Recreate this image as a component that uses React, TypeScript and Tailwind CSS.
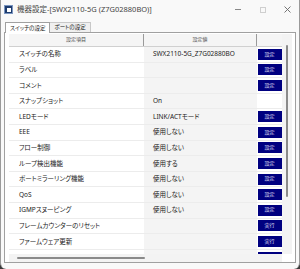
const rows: { name: string; value: string; action: string | null }[] = [
  { name: 'スイッチの名称', value: 'SWX2110-5G_Z7G02880BO', action: '設定' },
  { name: 'ラベル', value: '', action: '設定' },
  { name: 'コメント', value: '', action: '設定' },
  { name: 'スナップショット', value: 'On', action: null },
  { name: 'LEDモード', value: 'LINK/ACTモード', action: '設定' },
  { name: 'EEE', value: '使用しない', action: '設定' },
  { name: 'フロー制御', value: '使用しない', action: '設定' },
  { name: 'ループ検出機能', value: '使用する', action: '設定' },
  { name: 'ポートミラーリング機能', value: '使用しない', action: '設定' },
  { name: 'QoS', value: '使用しない', action: '設定' },
  { name: 'IGMPスヌーピング', value: '使用しない', action: '設定' },
  { name: 'フレームカウンターのリセット', value: '', action: '実行' },
  { name: 'ファームウェア更新', value: '', action: '実行' },
  { name: '', value: '', action: '' },
];

const font = "font-['Noto_Sans','Noto_Sans_CJK_JP',sans-serif] [font-feature-settings:'palt']";

export default function App() {
  return (
    <div className="w-[300px] h-[269px] bg-[#3a3a3a] overflow-hidden">
      <div className={`w-full h-full bg-[#f9f9f9] rounded-b-[6px] overflow-hidden flex flex-col border-x border-[#9a9a9a] ${font} text-[#1a1a1a]`}>
        {/* title bar */}
        <div className="h-[19px] flex items-center shrink-0">
          <div className="ml-[3px] w-[9px] h-[9px] bg-[#1d3b6e] border border-[#7a95c0] flex items-center justify-center">
            <div className="w-[4px] h-[4px] bg-white" />
          </div>
          <span className="ml-[4px] text-[7.5px] text-[#444]">機器設定-[SWX2110-5G (Z7G02880BO)]</span>
          <div className="ml-auto flex items-center h-full">
            <div className="w-[25px] h-full flex items-center justify-center">
              <div className="w-[6px] h-px bg-[#888]" />
            </div>
            <div className="w-[25px] h-full flex items-center justify-center">
              <div className="w-[6px] h-[6px] border border-[#cfcfcf]" />
            </div>
            <div className="w-[24px] h-full flex items-center justify-center">
              <svg width="7" height="7" viewBox="0 0 7 7">
                <path d="M0.5 0.5L6.5 6.5M6.5 0.5L0.5 6.5" stroke="#666" strokeWidth="0.9" />
              </svg>
            </div>
          </div>
        </div>

        {/* tabs */}
        <div className="h-[11px] mt-[2px] flex items-end pl-[4px] shrink-0">
          <div className="h-[11px] px-[4px] flex items-center bg-white border border-b-0 border-[#a0a0a0] text-[5.5px] relative top-px z-10">
            スイッチの設定
          </div>
          <div className="h-[10px] px-[4px] flex items-center bg-[#f0f0f0] border border-b-0 border-l-0 border-[#c8c8c8] text-[5.5px]">
            ポートの設定
          </div>
        </div>

        {/* panel */}
        <div className="mx-[3px] border border-[#a0a0a0] bg-white h-[231px] flex flex-col pl-[4px] pr-[3px] pt-[1px] overflow-hidden shrink-0">
          <div className="flex flex-1 min-h-0">
            <div className="flex-1 flex flex-col min-w-0">
              {/* header */}
              <div className="h-[13px] flex bg-[#f5f5f5] border-b border-[#d0d0d0] text-[5px] text-[#444] shrink-0">
                <div className="w-[135px] flex items-center justify-center border-r border-[#9a9a9a]">設定項目</div>
                <div className="w-[113px] flex items-center justify-center border-r border-[#9a9a9a]">設定値</div>
                <div className="flex-1" />
              </div>
              {/* rows */}
              <div className="flex-1 overflow-hidden">
                {rows.map((r, i) => (
                  <div key={i} className="h-[15.6px] flex border-b border-[#ececec] text-[6.5px]">
                    <div className="w-[135px] flex items-center pl-[10px] bg-white">{r.name}</div>
                    <div className="w-[113px] flex items-center pl-[9px] bg-[#f4f4f4]">{r.value}</div>
                    <div className="flex-1 flex items-center justify-center bg-white">
                      {r.action !== null && (
                        <div className="w-[24px] h-[11px] bg-[#000080] text-[#e8e8ff] text-[5px] flex items-center justify-center">
                          {r.action}
                        </div>
                      )}
                    </div>
                  </div>
                ))}
              </div>
            </div>
            {/* vertical scrollbar */}
            <div className="w-[10px] bg-[#f3f3f3] flex justify-center pt-[11px]">
              <div className="w-[2px] h-[152px] bg-[#8a8a8a] rounded-full" />
            </div>
          </div>
          {/* horizontal scrollbar */}
          <div className="h-[8px] bg-[#f3f3f3] flex items-center pl-[8px] shrink-0 mr-[10px]">
            <div className="w-[128px] h-[2px] bg-[#8a8a8a] rounded-full" />
          </div>
        </div>
      </div>
    </div>
  );
}
